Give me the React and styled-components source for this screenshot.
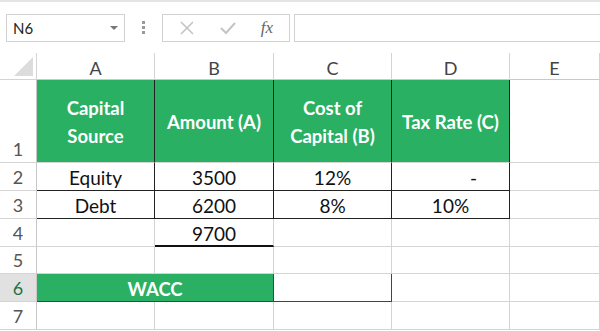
import React from 'react'
import styled, { createGlobalStyle } from 'styled-components'

const GlobalStyle = createGlobalStyle`
  html, body {
    margin: 0;
    padding: 0;
    background: #ffffff;
    font-family: Lato, "Open Sans", sans-serif;
  }
`

const Page = styled.div`
  width: 600px;
  height: 331px;
  overflow: hidden;
  background: #fff;
  border-top: 2px solid #e4e4e4;
  box-sizing: border-box;
`

const FormulaBar = styled.div`
  display: flex;
  align-items: center;
  height: 40px;
  padding: 11px 0 0 6px;
  box-sizing: border-box;
`

const NameBox = styled.div`
  width: 119px;
  height: 28px;
  box-sizing: border-box;
  border: 1px solid #d2d2d2;
  display: flex;
  align-items: center;
  justify-content: space-between;
  padding: 0 6px 0 6px;
  font-size: 15px;
  color: #222;
`

const Caret = styled.span`
  width: 0;
  height: 0;
  border-left: 4px solid transparent;
  border-right: 4px solid transparent;
  border-top: 4px solid #777;
`

const Grip = styled.div`
  width: 37px;
  display: flex;
  flex-direction: column;
  align-items: center;
  gap: 2px;
  & span {
    width: 3px;
    height: 3px;
    background: #9a9a9a;
  }
`

const ButtonBox = styled.div`
  width: 128px;
  height: 28px;
  box-sizing: border-box;
  border: 1px solid #d2d2d2;
  display: flex;
  align-items: center;
  justify-content: space-around;
  padding: 0 4px;
`

const Fx = styled.span`
  font-family: "Liberation Serif", serif;
  font-style: italic;
  font-size: 17px;
  color: #666;
`

const FormulaInput = styled.div`
  flex: 1;
  height: 28px;
  margin-left: 4px;
  box-sizing: border-box;
  border: 1px solid #d2d2d2;
  border-right: none;
`

const Sheet = styled.div`
  margin-top: 11px;
  display: grid;
  grid-template-columns: 37px 118px 119px 118px 118px 90px;
  grid-template-rows: 27px 83px 28px 28px 28px 27px 28px 28px;
`

const Corner = styled.div`
  position: relative;
  border-right: 1px solid #d4d4d4;
  border-bottom: 1px solid #d4d4d4;
  &::after {
    content: '';
    position: absolute;
    right: 3px;
    bottom: 3px;
    width: 0;
    height: 0;
    border-left: 19px solid transparent;
    border-bottom: 19px solid #dcdcdc;
  }
`

const ColHead = styled.div`
  display: flex;
  align-items: center;
  justify-content: center;
  padding-top: 3px;
  font-size: 18px;
  color: #444;
  border-right: 1px solid #d4d4d4;
  border-bottom: 1px solid #c8c8c8;
`

const RowHead = styled.div`
  display: flex;
  align-items: flex-end;
  justify-content: center;
  padding-bottom: 2px;
  box-sizing: border-box;
  font-size: 18px;
  color: ${({ $active }) => ($active ? '#217346' : '#555')};
  background: ${({ $active }) => ($active ? '#e1e1e1' : '#fff')};
  border-right: 1px solid #c8c8c8;
  border-bottom: 1px solid #d4d4d4;
`

const Cell = styled.div`
  display: flex;
  align-items: center;
  justify-content: ${({ $align }) => $align || 'center'};
  padding-right: ${({ $pr }) => $pr || 0}px;
  padding-top: 2px;
  box-sizing: border-box;
  font-size: 19px;
  color: #111;
  text-align: center;
  grid-column: ${({ $span }) => ($span ? `span ${$span}` : 'auto')};
  background: ${({ $green }) => ($green ? '#29b062' : '#fff')};
  border-right: 1px solid ${({ $rc }) => $rc || '#d4d4d4'};
  border-bottom: ${({ $bw }) => $bw || 1}px solid ${({ $bc }) => $bc || '#d4d4d4'};
`

const HeadText = styled.span`
  color: #fff;
  font-weight: 700;
  font-size: 18.5px;
  line-height: 28px;
`

const XIcon = () => (
  <svg width="16" height="16" viewBox="0 0 16 16">
    <path d="M2 2 L14 14 M14 2 L2 14" stroke="#c4c4c4" strokeWidth="1.6" fill="none" />
  </svg>
)

const CheckIcon = () => (
  <svg width="18" height="16" viewBox="0 0 18 16">
    <path d="M2 8 L7 13 L16 3" stroke="#c4c4c4" strokeWidth="2" fill="none" />
  </svg>
)

const dark = '#222'

export default function App() {
  return (
    <Page>
      <GlobalStyle />
      <FormulaBar>
        <NameBox>
          N6
          <Caret />
        </NameBox>
        <Grip>
          <span />
          <span />
          <span />
        </Grip>
        <ButtonBox>
          <XIcon />
          <CheckIcon />
          <Fx>fx</Fx>
        </ButtonBox>
        <FormulaInput />
      </FormulaBar>

      <Sheet>
        <Corner />
        <ColHead>A</ColHead>
        <ColHead>B</ColHead>
        <ColHead>C</ColHead>
        <ColHead>D</ColHead>
        <ColHead>E</ColHead>

        <RowHead>1</RowHead>
        <Cell $green $rc={dark}>
          <HeadText>Capital<br />Source</HeadText>
        </Cell>
        <Cell $green $rc={dark}>
          <HeadText>Amount (A)</HeadText>
        </Cell>
        <Cell $green $rc={dark}>
          <HeadText>Cost of<br />Capital (B)</HeadText>
        </Cell>
        <Cell $green $rc={dark}>
          <HeadText>Tax Rate (C)</HeadText>
        </Cell>
        <Cell />

        <RowHead>2</RowHead>
        <Cell $rc={dark} $bc={dark}>Equity</Cell>
        <Cell $rc={dark} $bc={dark}>3500</Cell>
        <Cell $rc={dark} $bc={dark}>12%</Cell>
        <Cell $rc={dark} $bc={dark} $align="flex-end" $pr={32}>-</Cell>
        <Cell />

        <RowHead>3</RowHead>
        <Cell $rc={dark} $bc={dark}>Debt</Cell>
        <Cell $rc={dark} $bc={dark}>6200</Cell>
        <Cell $rc={dark} $bc={dark}>8%</Cell>
        <Cell $rc={dark} $bc={dark}>10%</Cell>
        <Cell />

        <RowHead>4</RowHead>
        <Cell />
        <Cell $bc="#111" $bw={2}>9700</Cell>
        <Cell />
        <Cell />
        <Cell />

        <RowHead>5</RowHead>
        <Cell />
        <Cell />
        <Cell />
        <Cell />
        <Cell />

        <RowHead $active>6</RowHead>
        <Cell $green $span={2} $rc="#444" $bc="#444">
          <HeadText>WACC</HeadText>
        </Cell>
        <Cell $rc="#444" $bc="#444" />
        <Cell />
        <Cell />

        <RowHead>7</RowHead>
        <Cell />
        <Cell />
        <Cell />
        <Cell />
        <Cell />
      </Sheet>
    </Page>
  )
}
